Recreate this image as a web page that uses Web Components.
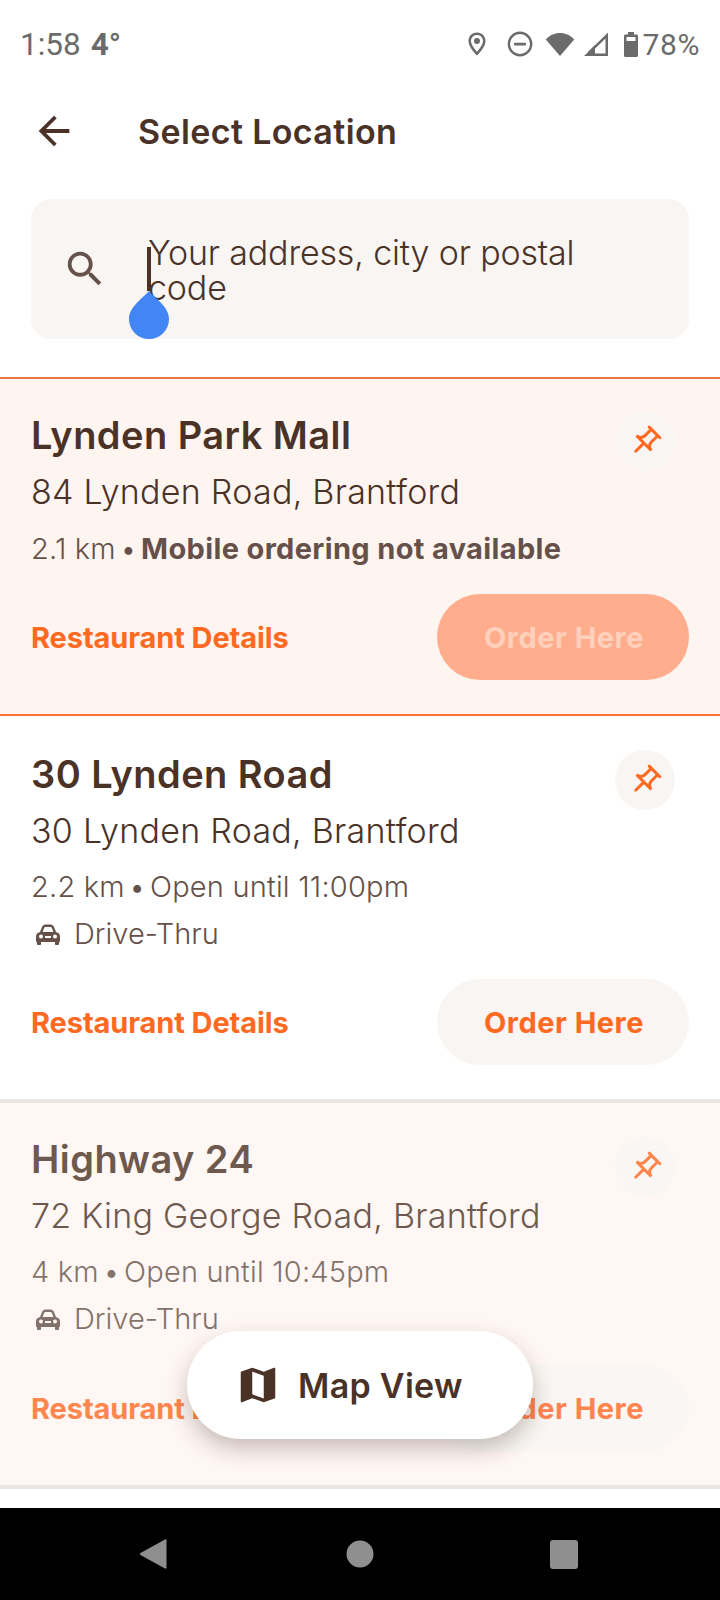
<!DOCTYPE html>
<html lang="en">
<head>
  <meta charset="UTF-8">
  <title>Select Location</title>
  <style>
    html, body { margin: 0; padding: 0; background: #fff; }
    body { width: 720px; height: 1600px; overflow: hidden; font-family: Inter, "Liberation Sans", sans-serif; color: #4b3227; }
    #page { position: relative; display: flex; flex-direction: column; height: 1600px; }
    #list { flex: 1; min-height: 0; }
  </style>
  <script>
    const PIN = 'M14 4v5c0 1.12.37 2.16 1 3H9c.65-.86 1-1.9 1-3V4h4m3-2H7c-.55 0-1 .45-1 1s.45 1 1 1h1v5c0 1.66-1.34 3-3 3v2h5.97v7l1 1 1-1v-7H19v-2c-1.66 0-3-1.34-3-3V4h1c.55 0 1-.45 1-1s-.45-1-1-1z';
    const CAR = 'M5 8 7 3C7.600 1.500 9 .5 10.500 .5h5C17 .5 18.400 1.500 19 3l2 5c2.500.8 4 2 4 4.500V17c0 .6-.4 1-1 1v2c0 .6-.4 1-1 1h-2c-.6 0-1-.4-1-1v-2H6v2c0 .6-.4 1-1 1H3c-.6 0-1-.4-1-1v-2c-.6 0-1-.4-1-1v-4.500C1 10 2.500 8.800 5 8zM7.600 8h10.800L17 4.200C16.700 3.400 16.200 3 15.500 3h-5c-.7 0-1.200.4-1.500 1.200zM6 10.500a2 2 0 1 0 0 4 2 2 0 0 0 0-4zm14 0a2 2 0 1 0 0 4 2 2 0 0 0 0-4zM10 12v2h6v-2z';

    class StatusBar extends HTMLElement {
      connectedCallback() {
        this.attachShadow({mode: 'open'}).innerHTML = `
          <style>
            :host { display: flex; align-items: center; height: 88px; padding: 0 20px; box-sizing: border-box;
                    font-family: Roboto, sans-serif; font-size: 31.5px; color: #6b6b6b; }
            .temp { font-weight: 700; margin-left: 10px; }
            .right { margin-left: auto; display: flex; align-items: center; font-size: 30px; }
            svg { display: block; fill: #6b6b6b; }
            .pct { letter-spacing: 0.6px; margin-left: 5px; }
          </style>
          <span>1:58</span><span class="temp">4°</span>
          <div class="right">
            <svg width="20" height="26" viewBox="0 0 20 26" style="margin-right:20px"><path fill-rule="evenodd" d="M10 1.5C4.8 1.5 1.5 5.4 1.5 10c0 4.800 4.500 10.500 8.500 14.500 4-4 8.500-9.700 8.500-14.500C18.500 5.400 15.200 1.500 10 1.500zm0 2.500c3.600 0 6 2.700 6 6 0 3.200-3 7.300-6 10.700-3-3.400-6-7.500-6-10.700 0-3.300 2.400-6 6-6z"/><circle cx="10" cy="10" r="3"/></svg>
            <svg width="26" height="26" viewBox="0 0 26 26" style="margin-right:12px"><circle cx="13" cy="13" r="11.200" fill="none" stroke="#6b6b6b" stroke-width="2.400"/><rect x="7" y="11.700" width="12" height="2.700" rx="1"/></svg>
            <svg width="30" height="24" viewBox="0 0 30 24" style="margin-right:9px"><path d="M15 24 .8 7.500C4.500 3.300 9.400 1 15 1s10.500 2.300 14.200 6.500z"/></svg>
            <svg width="24" height="24" viewBox="0 0 24 24" style="margin-right:16px"><path fill-rule="evenodd" d="M24 .5V24H0zM21.500 6.500 6 21.500h15.500z"/><path d="M4 20l7-7v9H4z"/></svg>
            <svg width="14" height="25" viewBox="0 0 14 25"><path fill-rule="evenodd" d="M4 0h6v2.500h2.500c.9 0 1.500.6 1.500 1.500v19.500c0 .9-.6 1.500-1.500 1.500h-11C.6 25 0 24.400 0 23.500V4c0-.9.6-1.500 1.500-1.500H4zM2.500 5v4h9V5z"/></svg>
            <span class="pct">78%</span>
          </div>`;
      }
    }
    customElements.define('status-bar', StatusBar);

    class AppHeader extends HTMLElement {
      connectedCallback() {
        this.attachShadow({mode: 'open'}).innerHTML = `
          <style>
            :host { display: flex; align-items: center; height: 86px; padding-left: 31px; }
            svg { display: block; width: 46px; height: 46px; fill: #4b3227; }
            h1 { margin: 0 0 0 61px; font-size: 34px; font-weight: 600; color: #4b3227; letter-spacing: .37px; }
          </style>
          <svg viewBox="0 0 24 24"><path d="M20 11H7.830l5.590-5.590L12 4l-8 8 8 8 1.410-1.410L7.830 13H20v-2z"/></svg>
          <h1><slot></slot></h1>`;
      }
    }
    customElements.define('app-header', AppHeader);

    class SearchField extends HTMLElement {
      connectedCallback() {
        this.attachShadow({mode: 'open'}).innerHTML = `
          <style>
            :host { display: flex; position: relative; box-sizing: border-box; height: 140px; margin: 25px 31px 38px;
                    padding: 36px 100px 0 31px; background: #f8f5f2; border-radius: 20px; }
            svg.icon { display: block; width: 46px; height: 46px; fill: #65514a; margin-top: 11px; flex: none; }
            .text { margin-left: 40px; font-size: 34px; line-height: 35px; font-weight: 300; letter-spacing: -.15px; color: #4b3227; }
            .cursor { position: absolute; left: 116px; top: 48px; width: 4px; height: 44px; background: #4b3227; }
            .drop { position: absolute; left: 98px; top: 92px; display: block; }
          </style>
          <svg class="icon" viewBox="0 0 24 24"><path d="M15.500 14h-.790l-.280-.270C15.410 12.590 16 11.110 16 9.500 16 5.910 13.090 3 9.500 3S3 5.910 3 9.500 5.910 16 9.500 16c1.610 0 3.090-.590 4.230-1.570l.270.280v.790l5 4.990L20.490 19l-4.990-5zm-6 0C7.010 14 5 11.990 5 9.500S7.010 5 9.500 5 14 7.010 14 9.500 11.990 14 9.500 14z"/></svg>
          <div class="text"><slot></slot></div>
          <div class="cursor"></div>
          <svg class="drop" width="40" height="48" viewBox="0 0 40 48"><path fill="#4285f4" d="M20 0 C27 8 40 16 40 28 A20 20 0 0 1 0 28 C0 16 13 8 20 0z"/></svg>`;
      }
    }
    customElements.define('search-field', SearchField);

    class LocationCard extends HTMLElement {
      connectedCallback() {
        const drive = this.hasAttribute('drive');
        this.attachShadow({mode: 'open'}).innerHTML = `
          <style>
            :host { display: block; box-sizing: border-box; padding: 36px 31px 34px; border-bottom: 4px solid #ece6e1; }
            :host([state=selected]) { background: #fff5f0; border-top: 2px solid #e5743f; border-bottom: 2px solid #ff7033; padding-top: 34px; }
            :host([state=closed]) { background: #fff7f4; padding-top: 34px; }
            .top { display: flex; justify-content: space-between; align-items: flex-start; }
            .pin { width: 60px; height: 60px; border-radius: 50%; background: #f8f5f2; margin: -2px 14px 0 0;
                   display: flex; align-items: center; justify-content: center; flex: none; }
            :host([state=closed]) .pin { margin-top: 0; }
            .pin svg { width: 36px; height: 36px; fill: #ff6a23; transform: translate(0, 1px) rotate(45deg); }
            .name { font-size: 38px; line-height: 44px; font-weight: 600; letter-spacing: .45px; color: #4b3227; }
            .addr { font-size: 34px; line-height: 40px; margin-top: 15px; font-weight: 300; letter-spacing: .26px; color: #4b3227; }
            .meta { font-size: 29px; line-height: 40px; margin-top: 16px; font-weight: 300; letter-spacing: .2px; color: #65514a; }
            :host([state=selected]) .meta { margin-top: 17px; }
            .meta ::slotted(b) { font-weight: 700; letter-spacing: .35px; }
            .meta ::slotted(i) { font-style: normal; word-spacing: -4px; }
            .drive { display: flex; align-items: center; font-size: 29px; line-height: 40px; margin-top: 7px; font-weight: 300; color: #65514a; }
            .drive svg { width: 26px; height: 21px; fill: #65514a; margin: 0 13px 0 4px; }
            .actions { display: flex; justify-content: space-between; align-items: center; margin-top: 25px; }
            :host([state=closed]) .actions { margin-top: 26px; }
            .link { font-size: 29px; font-weight: 700; letter-spacing: -.1px; color: #ff6a23; }
            .order { width: 252px; height: 86px; border-radius: 43px; background: #f8f5f2; color: #ff6a23; font-size: 29px; font-weight: 700; letter-spacing: .5px;
                     display: flex; align-items: center; justify-content: center; padding-left: 2px; box-sizing: border-box; }
            :host([state=selected]) .order { background: #ffad8c; color: #ffd0bc; }
            :host([state=closed]) .name, :host([state=closed]) .addr, :host([state=closed]) .meta,
            :host([state=closed]) .drive, :host([state=closed]) .link, :host([state=closed]) .pin svg { opacity: .8; }
            :host([state=closed]) .pin { background: #f9f6f3; }
            :host([state=closed]) .order { background: #f9f6f3; color: #ff8550; }
          </style>
          <div class="top">
            <div>
              <div class="name">${this.getAttribute('name')}</div>
              <div class="addr">${this.getAttribute('address')}</div>
              <div class="meta"><slot></slot></div>
              ${drive ? `<div class="drive"><svg viewBox="0 0 26 21"><path fill-rule="evenodd" d="${CAR}"/></svg>Drive-Thru</div>` : ''}
            </div>
            <div class="pin"><svg viewBox="0 0 24 24"><path d="${PIN}"/></svg></div>
          </div>
          <div class="actions">
            <span class="link">Restaurant Details</span>
            <span class="order">Order Here</span>
          </div>`;
      }
    }
    customElements.define('location-card', LocationCard);

    class MapButton extends HTMLElement {
      connectedCallback() {
        this.attachShadow({mode: 'open'}).innerHTML = `
          <style>
            :host { position: absolute; left: 187px; top: 1331px; width: 346px; height: 108px; box-sizing: border-box; border-radius: 54px;
                    background: #fff; box-shadow: 0 10px 22px rgba(60,40,30,.28); display: flex; align-items: center; padding-left: 48px;
                    font-size: 34px; font-weight: 600; letter-spacing: .3px; color: #4b3227; }
            svg { display: block; width: 46px; height: 46px; fill: #4b3227; margin-right: 17px; }
          </style>
          <svg viewBox="0 0 24 24"><path d="M20.500 3l-.160.030L15 5.100 9 3 3.360 4.900c-.210.070-.360.250-.360.480V20.500c0 .280.220.500.500.500l.160-.030L9 18.900l6 2.100 5.640-1.900c.210-.070.360-.250.360-.480V3.500c0-.280-.220-.500-.500-.500zM15 19l-6-2.110V5l6 2.110V19z"/></svg>
          <slot></slot>`;
      }
    }
    customElements.define('map-button', MapButton);

    class NavBar extends HTMLElement {
      connectedCallback() {
        this.attachShadow({mode: 'open'}).innerHTML = `
          <style>
            :host { display: flex; align-items: center; justify-content: space-between; height: 92px; flex: none; background: #000; padding: 0 142px 0 139px; }
            svg { display: block; fill: #8f8f8f; }
            .home { margin-left: 3px; }
          </style>
          <svg width="28" height="32" viewBox="0 0 28 32"><path d="M26 1.500 1.500 15c-.8.500-.8 1.500 0 2L26 30.500c.8.400 1.500 0 1.500-1V2.500c0-1-.7-1.400-1.500-1z"/></svg>
          <svg class="home" width="28" height="28" viewBox="0 0 28 28"><circle cx="14" cy="14" r="13.500"/></svg>
          <svg width="28" height="29" viewBox="0 0 28 29"><rect width="28" height="29" rx="3"/></svg>`;
      }
    }
    customElements.define('nav-bar', NavBar);
  </script>
</head>
<body>
  <div id="page">
    <status-bar></status-bar>
    <app-header>Select Location</app-header>
    <search-field>Your address, city or postal code</search-field>
    <div id="list">
      <location-card state="selected" name="Lynden Park Mall" address="84 Lynden Road, Brantford">2.1 km<i> • </i><b>Mobile ordering not available</b></location-card>
      <location-card drive name="30 Lynden Road" address="30 Lynden Road, Brantford">2.2 km<i> • </i>Open until 11:00pm</location-card>
      <location-card state="closed" drive name="Highway 24" address="72 King George Road, Brantford">4 km<i> • </i>Open until 10:45pm</location-card>
    </div>
    <nav-bar></nav-bar>
    <map-button>Map View</map-button>
  </div>
</body>
</html>
